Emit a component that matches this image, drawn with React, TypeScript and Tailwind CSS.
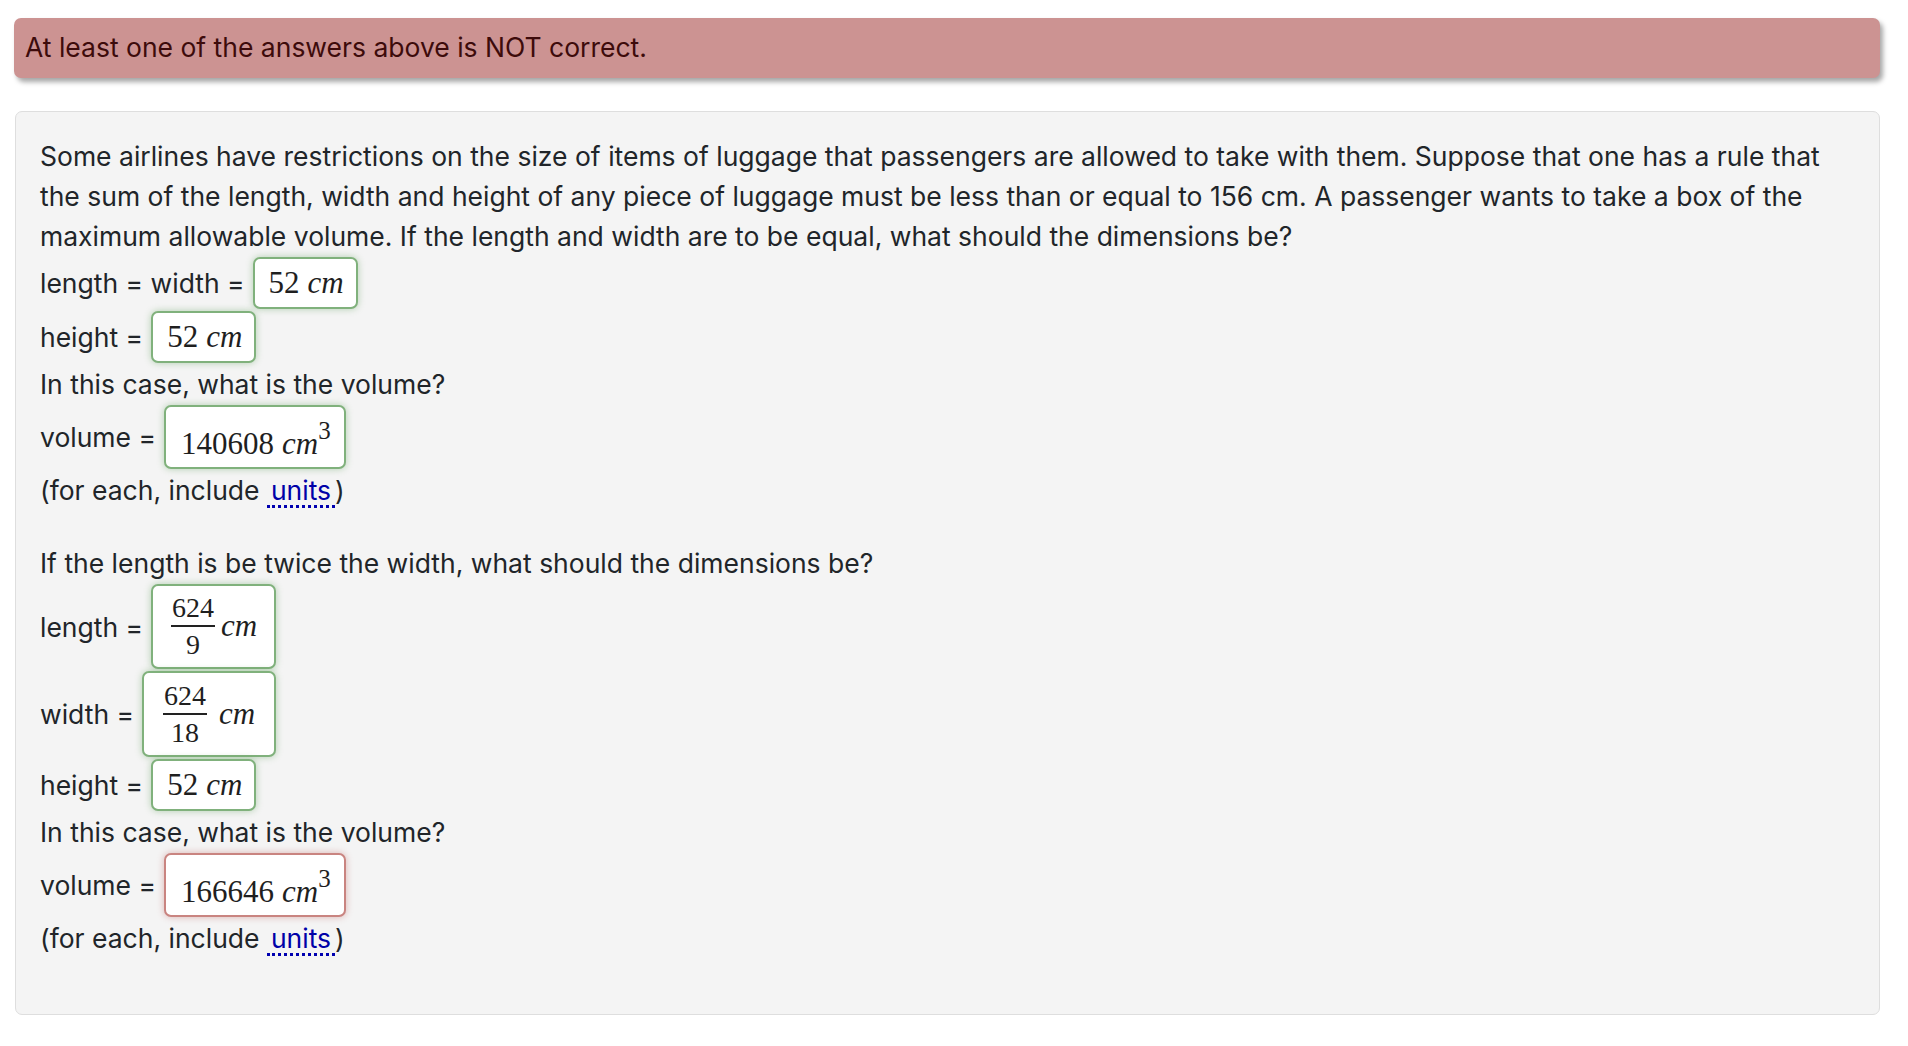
import type { ReactNode } from 'react';

const sans = 'font-["Inter","Liberation_Sans",sans-serif]';
const serif = 'font-["Liberation_Serif","Times_New_Roman",serif]';

function AnswerBox({ children, ok = true, className = '' }: { children: ReactNode; ok?: boolean; className?: string }) {
  const tone = ok
    ? 'border-[#80b17c] shadow-[0_0_7px_rgba(95,160,90,0.45)]'
    : 'border-[#c98480] shadow-[0_0_7px_rgba(190,100,95,0.45)]';
  return (
    <span className={`inline-flex items-center bg-white border-2 rounded-[7px] text-[#1f1f1f] ${serif} ${tone} ${className}`}>
      {children}
    </span>
  );
}

function Cm() {
  return <span className="italic ml-[8px]">cm</span>;
}

function Frac({ num, den }: { num: string; den: string }) {
  return (
    <span className="inline-flex flex-col items-center text-[28px] leading-none">
      <span className="px-[1px] pb-[3px]">{num}</span>
      <span className="h-[2px] w-full bg-[#222]" />
      <span className="px-[1px] pt-[4px]">{den}</span>
    </span>
  );
}

function Row({ label, children, className }: { label: string; children: ReactNode; className: string }) {
  return (
    <div className={`flex items-center ${className}`}>
      <span className="leading-[40px]">{label}</span>
      <span className="ml-[8px] flex">{children}</span>
    </div>
  );
}

function Units() {
  return (
    <>
      (for each, include{' '}
      <span className="inline-block leading-[30px] px-[4px] border-b-[3px] border-dotted border-[#0000b0] text-[#0000a8]">
        units
      </span>
      )
    </>
  );
}

function Volume({ value, ok }: { value: string; ok: boolean }) {
  return (
    <AnswerBox ok={ok} className="h-[64px] w-[182px] pl-[15px] pt-[12px]">
      <span className="text-[31px] leading-none whitespace-nowrap">
        {value}
        <span className="italic ml-[8px]">cm</span>
        <span className="relative -top-[15px] text-[25px]">3</span>
      </span>
    </AnswerBox>
  );
}

export default function App() {
  return (
    <div className={`min-h-screen bg-white pl-[14px] pr-[28px] pt-[18px] text-[26.5px] text-[#212529] ${sans}`}>
      <div className="h-[60px] flex items-center px-[11px] rounded-[7px] bg-[#cc9392] text-[#3d0b0b] shadow-[3px_4px_5px_rgba(0,0,0,0.35)]">
        At least one of the answers above is NOT correct.
      </div>

      <div className="mt-[33px] ml-[1px] border border-[#dedede] rounded-[7px] bg-[#f4f4f4] px-[24px] pt-[24px] pb-[56px]">
        <p className="leading-[40px] whitespace-nowrap">
          Some airlines have restrictions on the size of items of luggage that passengers are allowed to take with them. Suppose that one has a rule that
          <br />
          the sum of the length, width and height of any piece of luggage must be less than or equal to 156 cm. A passenger wants to take a box of the
          <br />
          maximum allowable volume. If the length and width are to be equal, what should the dimensions be?
        </p>

        <Row label="length = width =" className="h-[54px]">
          <AnswerBox className="h-[52px] w-[105px] pl-[14px] text-[31px]">
            52<Cm />
          </AnswerBox>
        </Row>
        <Row label="height =" className="h-[54px]">
          <AnswerBox className="h-[52px] w-[105px] pl-[14px] text-[31px]">
            52<Cm />
          </AnswerBox>
        </Row>
        <p className="leading-[40px]">In this case, what is the volume?</p>
        <Row label="volume =" className="h-[66px]">
          <Volume value="140608" ok />
        </Row>
        <p className="leading-[40px]">
          <Units />
        </p>

        <p className="leading-[40px] mt-[33px]">If the length is be twice the width, what should the dimensions be?</p>
        <Row label="length =" className="h-[87px]">
          <AnswerBox className="h-[85px] w-[125px] pl-[18px] text-[31px]">
            <Frac num="624" den="9" />
            <span className="italic ml-[6px]">cm</span>
          </AnswerBox>
        </Row>
        <Row label="width =" className="h-[88px]">
          <AnswerBox className="h-[86px] w-[134px] pl-[19px] text-[31px]">
            <Frac num="624" den="18" />
            <span className="italic ml-[12px]">cm</span>
          </AnswerBox>
        </Row>
        <Row label="height =" className="h-[54px]">
          <AnswerBox className="h-[52px] w-[105px] pl-[14px] text-[31px]">
            52<Cm />
          </AnswerBox>
        </Row>
        <p className="leading-[40px]">In this case, what is the volume?</p>
        <Row label="volume =" className="h-[66px]">
          <Volume value="166646" ok={false} />
        </Row>
        <p className="leading-[40px]">
          <Units />
        </p>
      </div>
    </div>
  );
}
